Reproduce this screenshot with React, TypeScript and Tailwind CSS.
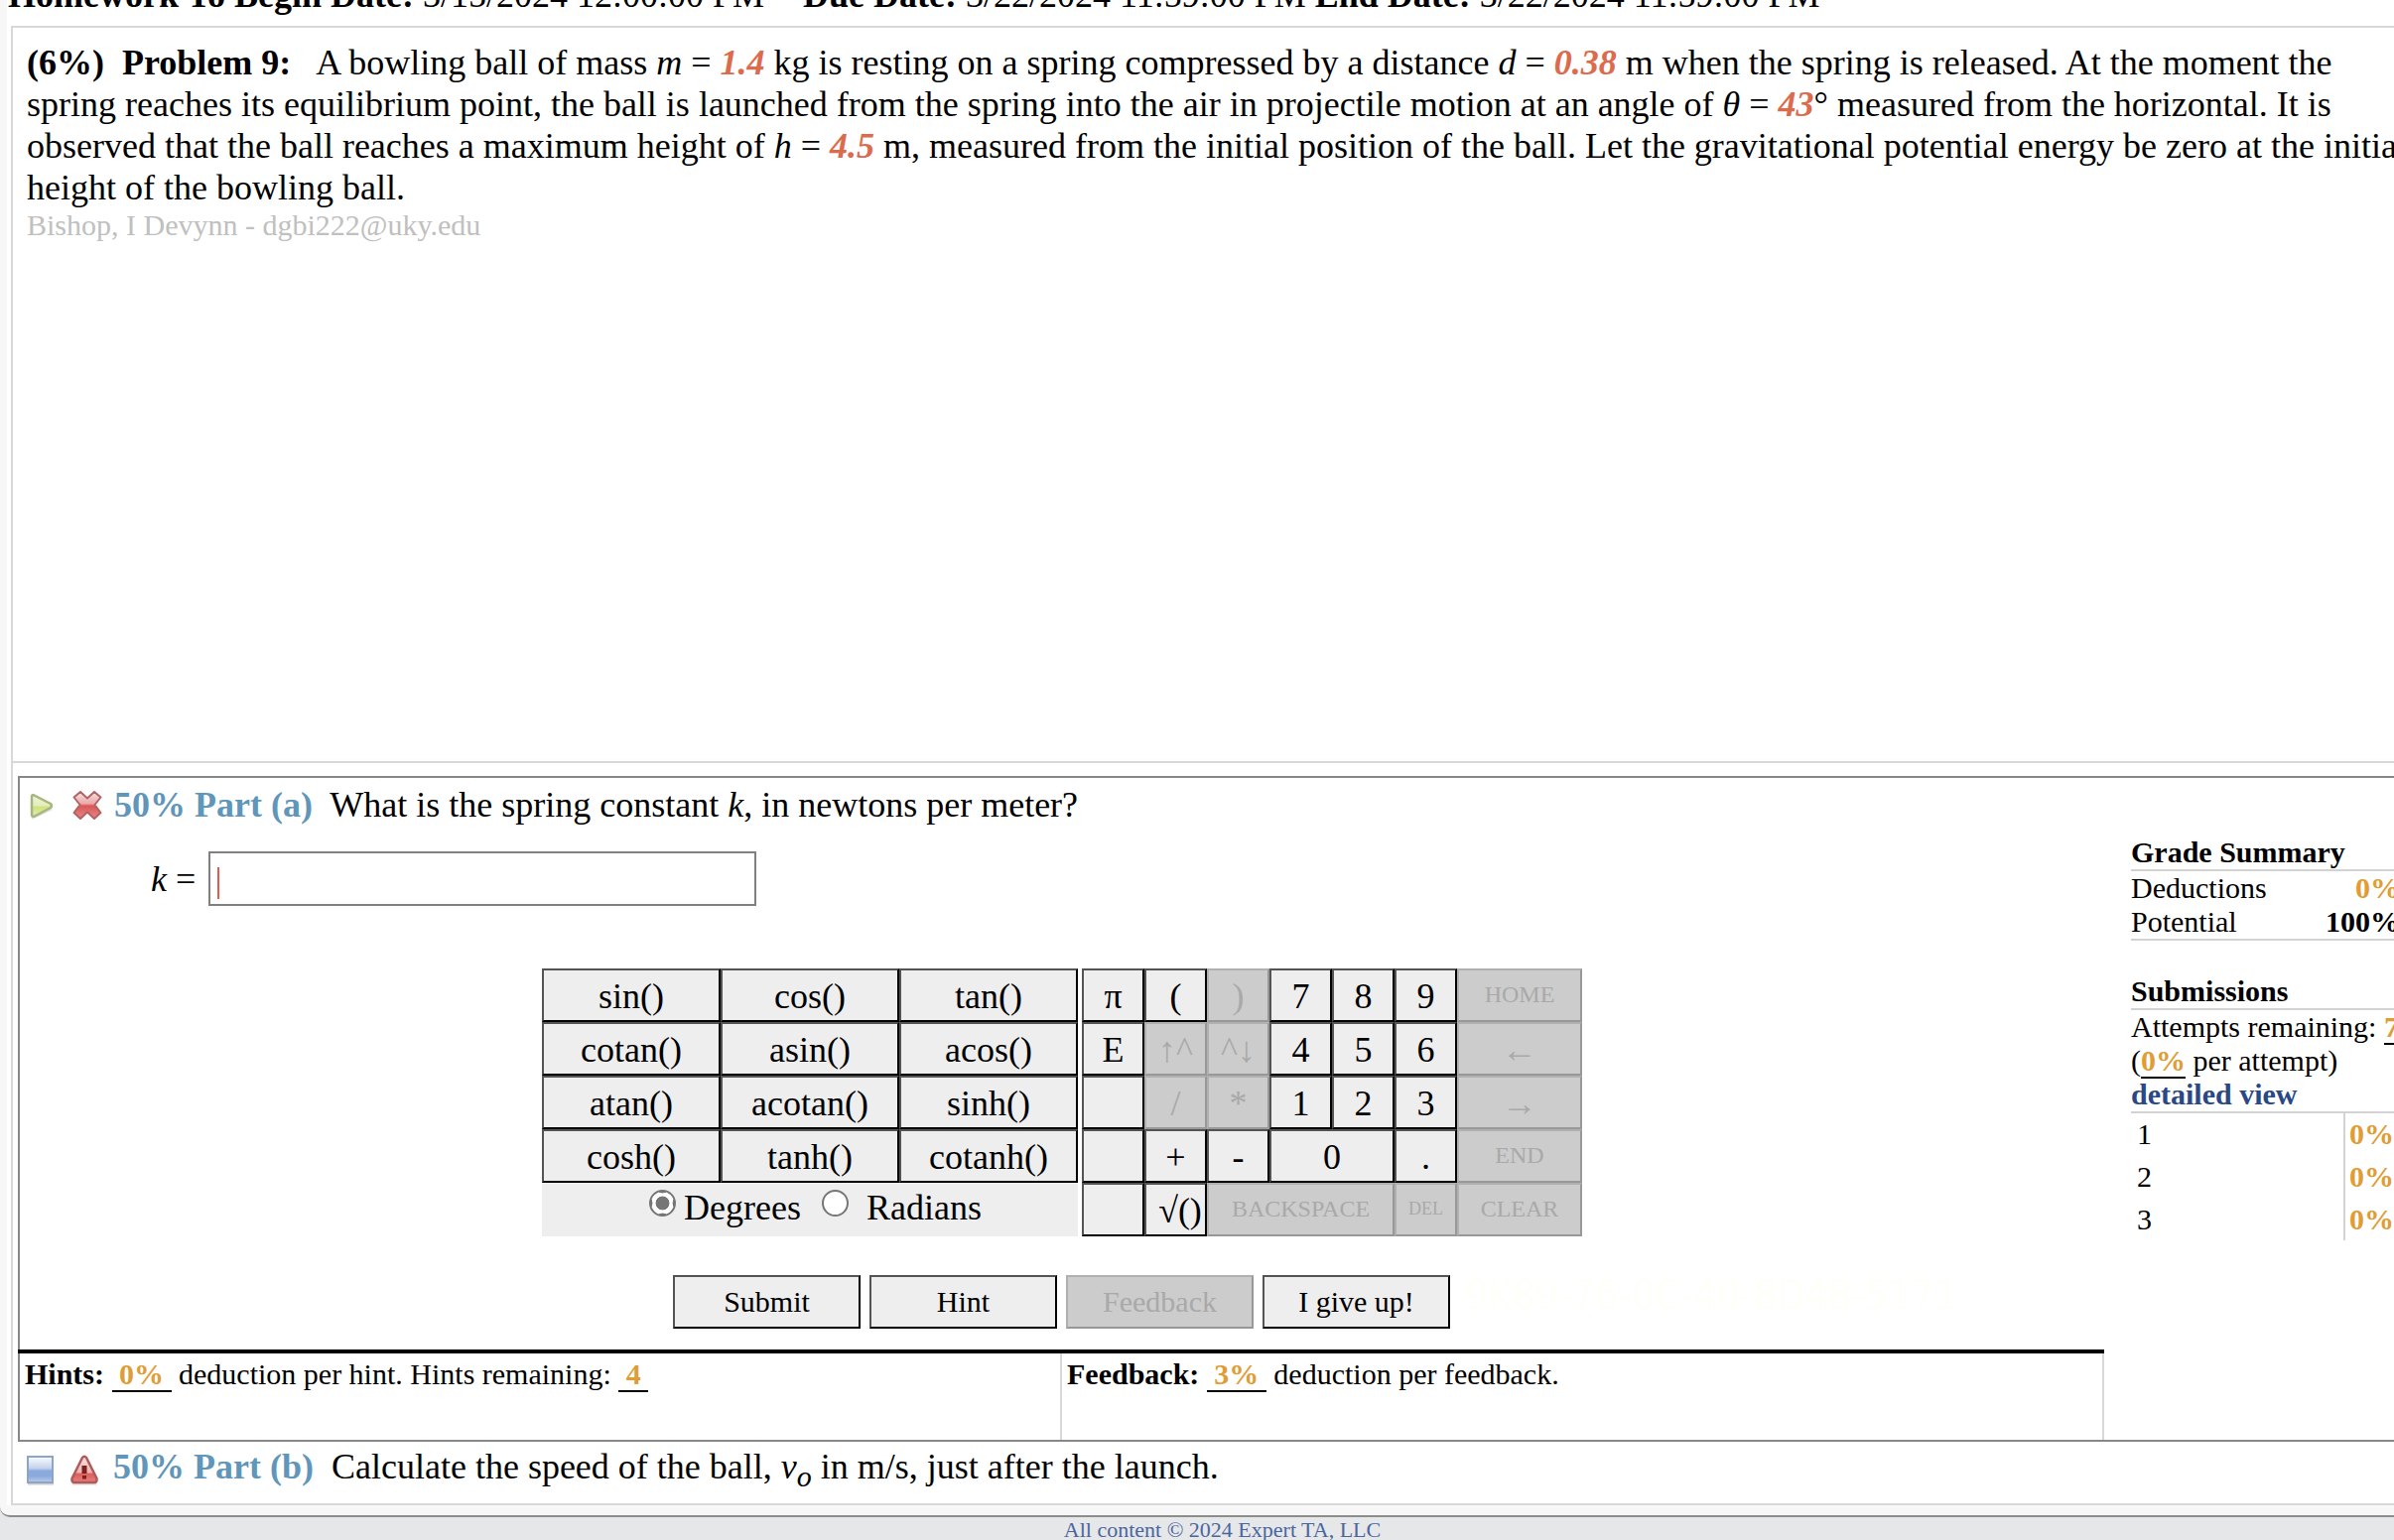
import React from "react";

type Key = { label: string; span?: number; off?: boolean; small?: "sm" | "xs" };

const functionKeys = [
  "sin()", "cos()", "tan()",
  "cotan()", "asin()", "acos()",
  "atan()", "acotan()", "sinh()",
  "cosh()", "tanh()", "cotanh()",
];

const keypad: Key[] = [
  { label: "π" }, { label: "(" }, { label: ")", off: true }, { label: "7" }, { label: "8" }, { label: "9" },
  { label: "HOME", off: true, small: "sm", span: 2 },
  { label: "E" }, { label: "↑^", off: true }, { label: "^↓", off: true }, { label: "4" }, { label: "5" }, { label: "6" },
  { label: "←", off: true, span: 2 },
  { label: "" }, { label: "/", off: true }, { label: "*", off: true }, { label: "1" }, { label: "2" }, { label: "3" },
  { label: "→", off: true, span: 2 },
  { label: "" }, { label: "+" }, { label: "-" }, { label: "0", span: 2 }, { label: "." },
  { label: "END", off: true, small: "sm", span: 2 },
  { label: "" }, { label: "\u00a0√()" }, { label: "BACKSPACE", off: true, small: "sm", span: 3 },
  { label: "DEL", off: true, small: "xs" },
  { label: "CLEAR", off: true, small: "sm", span: 2 },
];

const ON = "border-2 border-t-[#545454] border-l-[#545454] border-b-black border-r-black bg-[#eeeeee] text-black";
const OFF = "border-2 border-t-[#b0b0b0] border-l-[#b0b0b0] border-b-[#989898] border-r-[#989898] bg-[#cccccc] text-[#a9a9a9]";

function PadButton({ label, span = 1, off, small }: Key) {
  const size = small === "sm" ? "text-[24px] pb-0.5" : small === "xs" ? "text-[18px] pb-0.5" : "text-[36px] pt-0.5";
  const col = span === 3 ? "col-span-3" : span === 2 ? "col-span-2" : "";
  return (
    <button
      type="button"
      disabled={off}
      aria-label={label.trim() || "blank"}
      className={`flex h-[54px] items-center justify-center whitespace-nowrap leading-[42px] ${off ? OFF : ON} ${size} ${col}`}
    >
      {label}
    </button>
  );
}

function ActionButton({ label, off }: { label: string; off?: boolean }) {
  return (
    <button type="button" disabled={off} className={`h-[54px] w-[189px] text-[30px] leading-[34px] ${off ? OFF : ON}`}>
      {label}
    </button>
  );
}

function PlayIcon() {
  return (
    <svg className="size-8 shrink-0" viewBox="0 0 32 32" aria-hidden="true">
      <defs>
        <linearGradient id="play" x1="0" y1="0" x2="0" y2="1">
          <stop offset="0" stopColor="#eef3d8" />
          <stop offset="0.5" stopColor="#e3edbb" />
          <stop offset="0.55" stopColor="#cfe27a" />
          <stop offset="1" stopColor="#e0edb0" />
        </linearGradient>
      </defs>
      <path d="M6 29.500 L26 20" stroke="#000" strokeOpacity="0.12" strokeWidth="3" />
      <path d="M6 8 Q6 5.500 8.500 6.500 L25 15 Q27 17 25 19 L9 27.500 Q6 28.500 6 26 Z" fill="url(#play)" stroke="#a5b681" strokeWidth="2.500" strokeLinejoin="round" />
    </svg>
  );
}

function CrossIcon() {
  return (
    <svg className="size-8 shrink-0" viewBox="0 0 32 32" aria-hidden="true">
      <defs>
        <linearGradient id="cross" x1="0" y1="0" x2="0" y2="1">
          <stop offset="0" stopColor="#f7e0e0" />
          <stop offset="0.44" stopColor="#eca9a9" />
          <stop offset="0.52" stopColor="#d95656" />
          <stop offset="1" stopColor="#e88a8a" />
        </linearGradient>
      </defs>
      <path d="M9 3 L16 9.500 L23 3 L29.500 8.500 L23.500 16 L29.500 24 L23 30 L16 23.500 L9 30 L2.500 24 L8.500 16 L2.500 8.500 Z" fill="url(#cross)" stroke="#b06464" strokeWidth="2" strokeLinejoin="round" />
    </svg>
  );
}

function SquareIcon() {
  return (
    <svg className="size-8 shrink-0" viewBox="0 0 32 32" aria-hidden="true">
      <defs>
        <linearGradient id="square" x1="0" y1="0" x2="0" y2="1">
          <stop offset="0" stopColor="#fbfcff" />
          <stop offset="0.45" stopColor="#c3d2ec" />
          <stop offset="0.55" stopColor="#8aa9dc" />
          <stop offset="0.75" stopColor="#8aa9dc" />
          <stop offset="1" stopColor="#bccdea" />
        </linearGradient>
      </defs>
      <path d="M3 30.500 H29" stroke="#000" strokeOpacity="0.2" strokeWidth="2" />
      <rect x="3" y="3" width="25" height="26" fill="url(#square)" stroke="#8fa5c6" strokeWidth="2" />
    </svg>
  );
}

function WarningIcon() {
  return (
    <svg className="size-8 shrink-0" viewBox="0 0 32 32" aria-hidden="true">
      <defs>
        <linearGradient id="warn" x1="0" y1="0" x2="0" y2="1">
          <stop offset="0" stopColor="#f7e3e3" />
          <stop offset="0.6" stopColor="#eeb4b4" />
          <stop offset="0.68" stopColor="#dd5f5f" />
          <stop offset="1" stopColor="#e88080" />
        </linearGradient>
      </defs>
      <path d="M4 30.500 H28" stroke="#000" strokeOpacity="0.15" strokeWidth="2" />
      <path d="M14 4 Q16 1.500 18 4 L28.500 25 Q29 29 26 29 H6 Q3 29 3.500 25 Z" fill="url(#warn)" stroke="#b25a5a" strokeWidth="2.500" strokeLinejoin="round" />
      <path d="M13.500 12 H18.500 V20 H13.500 Z M14 22 H18 V25.500 H14 Z" fill="#7c2020" />
    </svg>
  );
}

const Val = ({ children }: { children: React.ReactNode }) => (
  <b className="italic text-[#dc6b4e]">{children}</b>
);

const Blank = ({ children }: { children: React.ReactNode }) => (
  <b className="border-b-2 border-black text-[#e09d35]">{children}</b>
);

export default function App() {
  return (
    <div className="min-h-screen overflow-hidden bg-[#e5e7e8] font-['Liberation_Serif',serif] text-black">
      <div className="-mt-7 -mr-12 rounded-bl-[10px] border-b-2 border-[#8a8d8a] bg-[#f7f7f7] pb-2.5">
        <div className="ml-[7px] bg-white pl-1">
          <header className="h-[54px] whitespace-pre pt-0.5 text-[36px] leading-[42px]">
            <span className="-ml-[3px]"><b>Homework To Begin Date:</b>{" 3/15/2024 12:00:00 PM    "}<b className="ml-[3px]">Due Date:</b>{" 3/22/2024 11:59:00 PM "}<b>End Date:</b>{" 3/22/2024 11:59:00 PM"}</span>
          </header>
          <main className="border-2 border-[#d8d8d8]">
            <section className="h-[741px] border-b-2 border-[#d8d8d8] pt-3.5 pr-7 pl-3.5">
              <p className="text-[36px] leading-[42px]">
                <b>(6%)&nbsp; Problem 9:</b>&nbsp;&nbsp; A bowling ball of mass <i>m</i> = <Val>1.4</Val> kg is resting on a spring compressed by a distance <i>d</i> = <Val>0.38</Val> m when the spring is released. At the moment the spring reaches its equilibrium point, the ball is launched from the spring into the air in projectile motion at an angle of <i>θ</i> = <Val>43</Val>° measured from the horizontal. It is observed that the ball reaches a maximum height of <i>h</i> = <Val>4.5</Val> m, measured from the initial position of the ball. Let the gravitational potential energy be zero at the initial height of the bowling ball.
              </p>
              <p className="text-[30px] leading-[34px] text-[#c0c0c0]">Bishop, I Devynn - dgbi222@uky.edu</p>
            </section>

            <section className="mt-[13px] ml-[5px] border-2 border-r-0 border-[#888888]">
              <div className="flex items-center pt-1.5 pl-1.5 text-[36px] leading-[42px]">
                <PlayIcon />
                <span className="w-3.5" />
                <CrossIcon />
                <h2 className="ml-[11px] whitespace-pre"><b className="text-[#6096ba]">50% Part (a)</b>{"  What is the spring constant "}<i>k</i>, in newtons per meter?</h2>
              </div>

              <div className="flex justify-between pr-10">
                <div className="w-[2100px]">
                  <div className="mt-[26px] flex items-center pl-[132px]">
                    <label htmlFor="answer" className="mr-[13px] text-[36px] leading-[42px]"><i>k</i> =</label>
                    <div className="flex h-[55px] w-[552px] items-center border-2 border-[#808080] px-[7px]">
                      <span className="mt-2 h-8 w-0.5 bg-[#e0301e]/80" />
                      <input id="answer" className="h-full min-w-0 flex-1 text-[36px] outline-none" />
                    </div>
                  </div>

                  <div className="mt-[63px] ml-[526px] flex gap-1">
                    <div className="w-[540px] bg-[#eeeeee]">
                      <div className="grid grid-cols-3">
                        {functionKeys.map((k) => <PadButton key={k} label={k} />)}
                      </div>
                      <div className="flex items-start pt-1 pl-[108px] text-[36px] leading-[42px]">
                        <input id="deg" type="radio" name="angle" defaultChecked className="mt-[3px] size-[27px] appearance-none rounded-full border-2 border-[#767676] bg-white bg-radial from-[#767676] from-55% to-white to-60% bg-origin-content p-[3px]" />
                        <label htmlFor="deg" className="ml-2">Degrees</label>
                        <input id="rad" type="radio" name="angle" className="mt-[3px] ml-[21px] size-[27px] appearance-none rounded-full border-2 border-[#767676] bg-white" />
                        <label htmlFor="rad" className="ml-[18px]">Radians</label>
                      </div>
                    </div>
                    <div className="grid w-[504px] grid-cols-8">
                      {keypad.map((k, i) => <PadButton key={i} {...k} />)}
                    </div>
                  </div>

                  <div className="mt-[39px] ml-[658px] flex gap-[9px]">
                    <ActionButton label="Submit" />
                    <ActionButton label="Hint" />
                    <ActionButton label="Feedback" off />
                    <ActionButton label="I give up!" />
                    <span className="ml-1.5 whitespace-nowrap font-['DejaVu_Sans_Condensed','Noto_Sans',sans-serif] text-[41px] leading-10 text-[#fffffa]">9K89-76-0C-40-8D48-5171</span>
                  </div>

                  <div className="mt-[21px] -ml-0.5 grid w-[2102px] grid-cols-[1052px_1050px] border-t-4 border-black text-[30px] leading-[34px]">
                    <div className="h-[87px] border-r-2 border-[#d8d8d8] pt-1 pl-[7px]">
                      <b>Hints:</b> <Blank>&nbsp;0%&nbsp;</Blank> deduction per hint. Hints remaining: <Blank>&nbsp;4&nbsp;</Blank>
                    </div>
                    <div className="h-[87px] border-r-2 border-[#d8d8d8] pt-1 pl-[5px]">
                      <b>Feedback:</b> <Blank>&nbsp;3%&nbsp;</Blank> deduction per feedback.
                    </div>
                  </div>
                </div>

                <aside className="mt-[10px] w-[271px] text-[30px] leading-[34px]">
                  <table className="w-full border-b-2 border-[#d3d3d3]">
                    <caption className="border-b-2 border-[#d3d3d3] text-left font-bold">Grade Summary</caption>
                    <tbody>
                      <tr><td>Deductions</td><td className="text-right font-bold text-[#e09d35]">0%</td></tr>
                      <tr><td>Potential</td><td className="text-right font-bold">100%</td></tr>
                    </tbody>
                  </table>
                  <h3 className="mt-[34px] border-b-2 border-[#d3d3d3] font-bold">Submissions</h3>
                  <p className="whitespace-nowrap">Attempts remaining: <Blank>7&nbsp;</Blank></p>
                  <p>(<Blank>0%</Blank> per attempt)</p>
                  <a href="#detail" className="block font-bold text-[#2a4885]">detailed view</a>
                  <table className="w-full border-t-2 border-[#d3d3d3]">
                    <tbody>
                      {[1, 2, 3].map((n) => (
                        <tr key={n} className="h-[43px]">
                          <td className="pl-1.5">{n}</td>
                          <td className="w-14 border-l-2 border-[#d3d3d3] pl-1 font-bold text-[#e09d35]">0%</td>
                        </tr>
                      ))}
                    </tbody>
                  </table>
                </aside>
              </div>
            </section>

            <div className="flex h-[62px] items-start pt-1 pl-3 text-[36px] leading-[42px]">
              <span className="pt-2"><SquareIcon /></span>
              <span className="pt-2 pl-3"><WarningIcon /></span>
              <h2 className="ml-[13px] whitespace-pre"><b className="text-[#6096ba]">50% Part (b)</b>{"  Calculate the speed of the ball, "}<i>v<sub className="text-[30px]">o</sub></i> in m/s, just after the launch.</h2>
            </div>
          </main>
        </div>
      </div>
      <footer className="ml-[51px] text-center text-[22px] leading-[26px] text-[#4a66a0]">All content © 2024 Expert TA, LLC</footer>
    </div>
  );
}
